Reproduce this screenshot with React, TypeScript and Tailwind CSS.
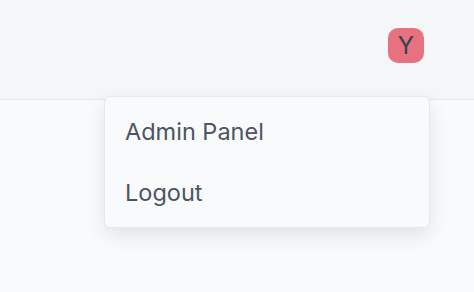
export default function App() {
  return (
    <div className="relative h-[292px] w-[474px] overflow-hidden bg-[#f9fafb] font-['Inter',sans-serif]">
      <header className="flex h-[100px] items-start justify-end border-b border-[#e5e7eb] bg-[#f5f6f8] pr-[50px] pt-[28px]">
        <div className="flex h-[35px] w-[36px] items-center justify-center rounded-[10px] bg-[#e8717f] text-[24px] text-[#374151]">
          Y
        </div>
      </header>
      <div className="absolute left-[104px] top-[96px] flex h-[132px] w-[326px] flex-col rounded-[6px] border border-[#e5e7eb] bg-[#f9fafb] py-[4px] shadow-[0_8px_20px_rgba(0,0,0,0.09)]">
        <div className="flex h-[61px] items-center px-[20px] text-[23.5px] text-[#4b5563]">Admin Panel</div>
        <div className="flex h-[61px] items-center px-[20px] text-[23.5px] text-[#4b5563]">Logout</div>
      </div>
    </div>
  );
}
